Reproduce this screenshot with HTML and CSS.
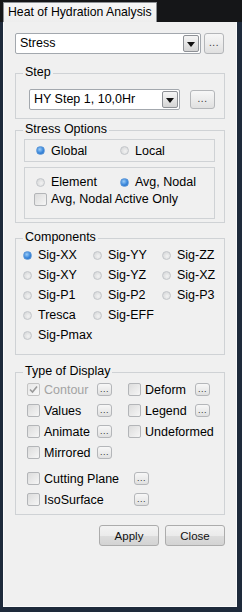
FILE: index.html
```html
<!DOCTYPE html>
<html>
<head>
<meta charset="utf-8">
<link rel="stylesheet" href="styles.css">
</head>
<body>
<div class="tabbar"><div class="tab">Heat of Hydration Analysis</div></div>
<div class="panel">
  <div class="top-row">
    <div class="combo combo-main"><span class="combo-text">Stress</span><span class="drop"><i class="tri"></i></span></div>
    <button class="dots dots-main">...</button>
  </div>

  <fieldset class="group group-step">
    <legend>Step</legend>
    <div class="step-row">
      <div class="combo combo-step"><span class="combo-text">HY Step 1, 10,0Hr</span><span class="drop"><i class="tri"></i></span></div>
      <button class="dots dots-step">...</button>
    </div>
  </fieldset>

  <fieldset class="group group-stress">
    <legend>Stress Options</legend>
    <div class="stress-body">
      <div class="box box-axis">
        <label class="opt"><span class="radio on"></span>Global</label>
        <label class="opt"><span class="radio"></span>Local</label>
      </div>
      <div class="box box-avg">
        <label class="opt"><span class="radio"></span>Element</label>
        <label class="opt"><span class="radio on"></span>Avg, Nodal</label>
        <label class="opt opt-wide"><span class="check"></span>Avg, Nodal Active Only</label>
      </div>
    </div>
  </fieldset>

  <fieldset class="group group-comp">
    <legend>Components</legend>
    <div class="comp-grid">
      <label class="opt"><span class="radio on"></span>Sig-XX</label>
      <label class="opt"><span class="radio"></span>Sig-YY</label>
      <label class="opt"><span class="radio"></span>Sig-ZZ</label>
      <label class="opt"><span class="radio"></span>Sig-XY</label>
      <label class="opt"><span class="radio"></span>Sig-YZ</label>
      <label class="opt"><span class="radio"></span>Sig-XZ</label>
      <label class="opt"><span class="radio"></span>Sig-P1</label>
      <label class="opt"><span class="radio"></span>Sig-P2</label>
      <label class="opt"><span class="radio"></span>Sig-P3</label>
      <label class="opt"><span class="radio"></span>Tresca</label>
      <label class="opt"><span class="radio"></span>Sig-EFF</label>
      <span></span>
      <label class="opt"><span class="radio"></span>Sig-Pmax</label>
    </div>
  </fieldset>

  <fieldset class="group group-type">
    <legend>Type of Display</legend>
    <div class="type-body">
      <div class="type-grid">
        <div class="titem c1"><label class="opt disabled"><span class="check checked"><svg width="11" height="11" viewBox="0 0 11 11"><path d="M2 5.5 L4.5 8 L9 2.5" fill="none" stroke="#9a9a9a" stroke-width="1.6"/></svg></span>Contour</label><button class="dots dots-sm">...</button></div>
        <div class="titem c2"><label class="opt"><span class="check"></span>Deform</label><button class="dots dots-sm">...</button></div>
        <div class="titem c1"><label class="opt"><span class="check"></span>Values</label><button class="dots dots-sm">...</button></div>
        <div class="titem c2"><label class="opt"><span class="check"></span>Legend</label><button class="dots dots-sm">...</button></div>
        <div class="titem c1"><label class="opt"><span class="check"></span>Animate</label><button class="dots dots-sm">...</button></div>
        <div class="titem c2"><label class="opt"><span class="check"></span>Undeformed</label></div>
        <div class="titem c1"><label class="opt"><span class="check"></span>Mirrored</label><button class="dots dots-sm">...</button></div>
      </div>
      <div class="type-list">
        <div class="titem c3"><label class="opt"><span class="check"></span>Cutting Plane</label><button class="dots dots-sm">...</button></div>
        <div class="titem c3"><label class="opt"><span class="check"></span>IsoSurface</label><button class="dots dots-sm">...</button></div>
      </div>
    </div>
  </fieldset>

  <div class="actions">
    <button class="btn">Apply</button>
    <button class="btn">Close</button>
  </div>
</div>
</body>
</html>
```

FILE: styles.css
```css
* { box-sizing: border-box; }
html, body { margin: 0; padding: 0; }
body {
  width: 242px;
  height: 612px;
  overflow: hidden;
  background: #1e2a3b;
  font-family: "Liberation Sans", Arial, sans-serif;
  font-size: 12.5px;
  color: #000;
}

.tabbar {
  height: 22px;
  background: #151618;
  padding: 2px 0 0 3px;
  display: flex;
}
.tab {
  width: 154px;
  height: 20px;
  background: linear-gradient(#f6f6f6, #eeeeee);
  border: 1px solid #8d9094;
  border-bottom: none;
  padding-left: 4px;
  line-height: 18px;
  font-size: 12.25px;
  white-space: nowrap;
}

.panel {
  margin: 0 5px 0 3px;
  height: 585px;
  background: #f0f0f0;
  border: 1px solid #fafafa;
  border-top-color: #f0f0f0;
  padding: 10px 11px 0 11px;
}

.top-row { display: flex; gap: 3px; }

.combo {
  display: flex;
  height: 21px;
  background: #fff;
  border: 1px solid #a3a8ae;
  border-radius: 2px;
}
.combo-main { width: 186px; }
.combo-step { width: 151px; }
.combo-text {
  flex: 1;
  padding-left: 4px;
  line-height: 18px;
  white-space: nowrap;
  overflow: hidden;
}
.drop {
  width: 16px;
  margin: 1px;
  border: 1px solid #8e9196;
  border-radius: 2px;
  background: linear-gradient(#f5f5f5, #e6e6e6 50%, #d4d4d4);
  display: flex;
  align-items: center;
  justify-content: center;
}
.tri {
  width: 0; height: 0;
  border-left: 4px solid transparent;
  border-right: 4px solid transparent;
  border-top: 5px solid #111;
  margin-top: 1px;
}

.dots {
  font-family: "Liberation Sans", Arial, sans-serif;
  padding: 0;
  margin: 0;
  border: 1px solid #b4b6b9;
  border-radius: 3px;
  background: linear-gradient(#f7f7f7, #ececec 50%, #e0e0e0);
  color: #333;
  font-size: 10px;
  letter-spacing: 0.5px;
  line-height: 1;
  display: flex;
  align-items: flex-end;
  justify-content: center;
}
.dots-main { width: 20px; height: 21px; padding-bottom: 5px; }
.dots-step { width: 25px; height: 19px; padding-bottom: 4px; }
.dots-sm { width: 15px; height: 13px; font-size: 9px; padding-bottom: 1px; }

.group {
  margin: 0;
  padding: 0;
  border: 1px solid #cfd2d5;
  min-width: 0;
}
.group legend {
  margin-left: 7px;
  padding: 0 2px 3px;
  line-height: 14px;
}
.group-step { margin-top: 11px; }
.group-stress { margin-top: 3px; }
.group-comp { margin-top: 7px; }
.group-type { margin-top: 9px; }

.step-row {
  display: flex;
  align-items: center;
  gap: 10px;
  padding: 7px 0 8px 13px;
}

.stress-body {
  display: flex;
  flex-direction: column;
  gap: 5px;
  padding: 0 9px 3px 8px;
}
.box {
  border: 1px solid #cfd2d5;
  display: grid;
  grid-template-columns: 84px auto;
  align-items: center;
}
.box-axis { height: 23px; padding-left: 11px; }
.box-avg {
  height: 52px;
  padding: 5px 0 0 11px;
  grid-template-rows: 18px 16px;
  align-content: start;
}
.opt-wide { grid-column: 1 / 3; margin-left: -2px; }

.opt {
  display: flex;
  align-items: center;
  gap: 6px;
  white-space: nowrap;
  line-height: 16px;
}
.radio {
  width: 9px;
  height: 9px;
  border-radius: 50%;
  border: 1px solid #c3c6ca;
  background: radial-gradient(circle at 60% 60%, #f2f2f2, #d0d2d4);
  flex: none;
}
.radio.on {
  border-color: #5c97d8;
  background: radial-gradient(circle at 40% 35%, #9cccf6, #3b88dc 55%, #1f62b6);
}
.check {
  width: 13px;
  height: 13px;
  border: 1px solid #b3b5b8;
  border-radius: 2px;
  background: linear-gradient(135deg, #dcdcdc, #f6f6f6);
  flex: none;
  display: flex;
  align-items: center;
  justify-content: center;
  margin-right: -2px;
}
.check.checked { background: linear-gradient(135deg, #e8e8e8, #f8f8f8); border-color: #c4c4c4; }
.opt.disabled { color: #a3a3a3; }

.comp-grid {
  display: grid;
  grid-template-columns: 70px 69px auto;
  grid-auto-rows: 16px;
  row-gap: 4px;
  padding: 0 0 11px 7px;
}

.type-body { padding: 0 0 6px 11px; }
.type-grid {
  display: grid;
  grid-template-columns: 101px auto;
  grid-auto-rows: 17px;
  row-gap: 4px;
}
.type-list {
  margin-top: 9px;
  display: grid;
  grid-auto-rows: 17px;
  row-gap: 4px;
}
.titem { display: flex; align-items: center; }
.titem .opt { gap: 6px; }
.c1 .opt { width: 70px; }
.c2 .opt { width: 67px; }
.c3 .opt { width: 107px; }

.actions {
  display: flex;
  justify-content: flex-end;
  gap: 6px;
  margin-top: 10px;
}
.btn {
  width: 60px;
  height: 21px;
  padding: 0;
  border: 1px solid #acacac;
  border-radius: 3px;
  background: linear-gradient(#f3f3f3, #ebebeb 50%, #dddddd 51%, #d3d3d3);
  font-family: "Liberation Sans", Arial, sans-serif;
  font-size: 11.5px;
  color: #111;
}
```
